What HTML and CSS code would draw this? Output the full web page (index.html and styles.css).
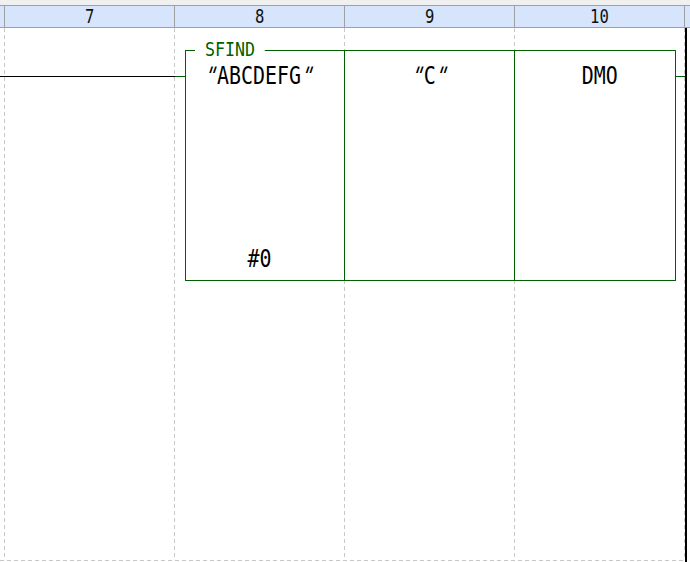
FILE: index.html
```html
<!DOCTYPE html>
<html>
<head>
<meta charset="utf-8">
<link rel="stylesheet" href="styles.css">
</head>
<body>
<div class="top"></div>
<div class="header">
  <div class="h-pad"></div>
  <div class="h-cell"><span class="ht">7</span></div>
  <div class="h-cell"><span class="ht">8</span></div>
  <div class="h-cell"><span class="ht">9</span></div>
  <div class="h-cell"><span class="ht">10</span></div>
  <div class="h-rest"></div>
</div>
<div class="canvas">
  <div class="grid">
    <div class="cols">
      <div class="g-pad"></div>
      <div class="g-col"></div>
      <div class="g-col"></div>
      <div class="g-col"></div>
      <div class="g-col"></div>
      <div class="g-last"></div>
    </div>
    <div class="g-bottom"></div>
  </div>
  <div class="rail"></div>

  <div class="wire wire-in"></div>
  <div class="wire wire-in-g"></div>
  <div class="wire wire-out"></div>

  <div class="box">
    <div class="title"><span class="tt">SFIND</span></div>
    <div class="cell c1">
      <div class="op"><span class="t"><span class="q">"</span>ABCDEFG<span class="q">"</span></span></div>
      <div class="op"><span class="t">#0</span></div>
    </div>
    <div class="cell c2">
      <div class="op"><span class="t"><span class="q">"</span>C<span class="q">"</span></span></div>
    </div>
    <div class="cell c3">
      <div class="op"><span class="t">DMO</span></div>
    </div>
  </div>
</div>
</body>
</html>
```
FILE: styles.css
```css
* { box-sizing: border-box; }
html, body {
  margin: 0;
  padding: 0;
}
body {
  width: 690px;
  height: 562px;
  overflow: hidden;
  background: #ffffff;
  font-family: "DejaVu Sans Mono", monospace;
  color: #000;
}
.top {
  height: 6px;
  background: #f0f0f0;
  border-bottom: 1px solid #a0a0a0;
}
.header {
  display: flex;
  height: 22px;
  background: #d6e5fb;
  border-bottom: 1px solid #a0a0a0;
}
.h-pad { width: 4px; }
.h-cell {
  width: 170px;
  border-left: 1px solid #a0a0a0;
  text-align: center;
  font-size: 19px;
  line-height: 21px;
  color: #111;
}
.h-rest {
  flex: 1;
  border-left: 1px solid #a0a0a0;
}
.ht {
  display: inline-block;
  transform: scaleX(0.82);
}
.canvas {
  position: relative;
  display: flex;
  height: 534px;
}
.grid {
  width: 685px;
  display: flex;
  flex-direction: column;
}
.cols {
  display: flex;
  height: 532px;
}
.g-pad { width: 4px; }
.g-col, .g-last {
  width: 170px;
  background: repeating-linear-gradient(to bottom, #c8c8c8 0 4px, transparent 4px 7px) no-repeat left top / 1px 100%;
}
.g-last { width: 1px; }
.g-bottom {
  height: 1px;
  background: repeating-linear-gradient(to right, #c8c8c8 0 4px, transparent 4px 7px);
}
.rail {
  width: 2px;
  background: #000;
}
.wire {
  position: absolute;
  top: 48px;
  height: 1px;
}
.wire-in { left: 0; width: 175px; background: #000; }
.wire-in-g { left: 175px; width: 10px; background: #006000; }
.wire-out { left: 676px; width: 9px; background: #006000; }
.box {
  position: absolute;
  left: 185px;
  top: 22px;
  width: 491px;
  height: 231px;
  border: 1px solid #006000;
  background: #fff;
  display: grid;
  grid-template-columns: 158px 170px 1fr;
}
.title {
  position: absolute;
  left: 9px;
  top: -13px;
  padding: 0 12px;
  background: #fff;
  font-size: 20px;
  line-height: 23px;
  color: #006000;
  transform: scaleX(0.83);
  transform-origin: left center;
}
.cell {
  display: flex;
  flex-direction: column;
  justify-content: space-between;
  padding-top: 11px;
  padding-bottom: 7px;
  text-align: center;
  font-size: 24px;
  line-height: 28px;
}
.c1 { padding-right: 11px; }
.c2 { border-left: 1px solid #006000; justify-content: flex-start; }
.c3 { border-left: 1px solid #006000; padding-left: 9px; justify-content: flex-start; }
.t {
  display: inline-block;
  transform: scaleX(0.83);
}
.q {
  display: inline-block;
  transform: skewX(-22deg);
}
```
